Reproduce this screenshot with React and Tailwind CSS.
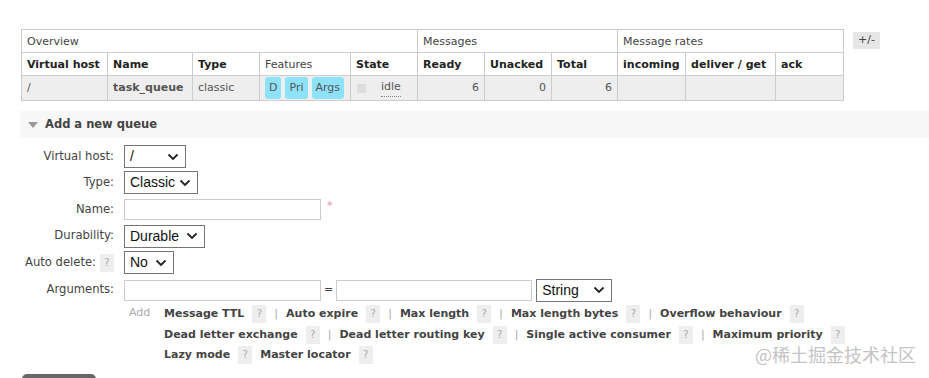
import React from 'react';

const font = { fontFamily: '"DejaVu Sans", Verdana, sans-serif' };

const Help = () => (
  <span className="inline-flex items-center justify-center w-[14px] h-[18px] bg-[#eeeeee] text-[#aaaaaa] text-[10px] font-normal align-middle">?</span>
);

const Chevron = () => (
  <svg width="12" height="8" viewBox="0 0 12 8" className="shrink-0">
    <path d="M1.5 1.5 L6 6 L10.5 1.5" fill="none" stroke="#222" strokeWidth="1.8" />
  </svg>
);

const Select = ({ value, width }) => (
  <div
    className={`flex items-center justify-between h-[23px] border border-[#767676] bg-white pl-[5px] pr-[6px] text-[14px] text-[#111] ${width}`}
    style={{ fontFamily: '"Liberation Sans", Arial, sans-serif' }}
  >
    <span>{value}</span>
    <Chevron />
  </div>
);

const TextInput = ({ width }) => (
  <div className={`h-[21px] border border-[#cccccc] bg-white ${width}`} />
);

const Arg = ({ label, sep = true }) => (
  <span className="inline-flex items-center gap-[8px] mr-[8px]">
    <span className="font-bold">{label}</span>
    <Help />
    {sep && <span className="text-[#aaaaaa] font-normal">|</span>}
  </span>
);

const FormRow = ({ label, help, children, h }) => (
  <div className={`flex items-center ${h}`}>
    <div className="w-[114px] flex justify-end items-center gap-[4px] text-[11.6px] text-[#444]">
      <span>{label}</span>
      {help && <Help />}
    </div>
    <div className="ml-[10px] flex items-center">{children}</div>
  </div>
);

export default function App() {
  const th = 'border border-[#cccccc] px-[5px] pt-[2px] text-left font-bold text-[#222] whitespace-nowrap';
  const thn = 'border border-[#cccccc] px-[5px] pt-[2px] text-left font-normal text-[#444]';
  const td = 'border border-[#cccccc] px-[5px] text-[#555] whitespace-nowrap';
  return (
    <div className="w-[929px] h-[378px] bg-white overflow-hidden text-[11px] text-[#444] relative" style={font}>
      <div className="flex items-start pt-[29px] pl-[21px]">
        <table className="border-collapse table-fixed w-[822px]">
          <colgroup>
            <col className="w-[86px]" />
            <col className="w-[85px]" />
            <col className="w-[67px]" />
            <col className="w-[91px]" />
            <col className="w-[67px]" />
            <col className="w-[67px]" />
            <col className="w-[67px]" />
            <col className="w-[66px]" />
            <col className="w-[68px]" />
            <col className="w-[90px]" />
            <col className="w-[68px]" />
          </colgroup>
          <thead>
            <tr className="h-[23px]">
              <th colSpan={5} className={thn}>Overview</th>
              <th colSpan={3} className={thn}>Messages</th>
              <th colSpan={3} className={thn}>Message rates</th>
            </tr>
            <tr className="h-[23px]">
              <th className={th}>Virtual host</th>
              <th className={th}>Name</th>
              <th className={th}>Type</th>
              <th className={thn}>Features</th>
              <th className={th}>State</th>
              <th className={th}>Ready</th>
              <th className={th}>Unacked</th>
              <th className={th}>Total</th>
              <th className={th}>incoming</th>
              <th className={th}>deliver / get</th>
              <th className={th}>ack</th>
            </tr>
          </thead>
          <tbody>
            <tr className="h-[25px] bg-[#eeeeee]">
              <td className={td}>/</td>
              <td className={`${td} font-bold text-[#222]`}>task_queue</td>
              <td className={td}>classic</td>
              <td className={td}>
                <div className="flex items-center gap-[4px]">
                  <span className="bg-[#8ee2f8] rounded-[3px] px-[4px] pt-[3px] pb-[2px] text-[#555]">D</span>
                  <span className="bg-[#8ee2f8] rounded-[3px] px-[4px] pt-[3px] pb-[2px] text-[#555]">Pri</span>
                  <span className="bg-[#8ee2f8] rounded-[3px] px-[4px] pt-[3px] pb-[2px] text-[#555]">Args</span>
                </div>
              </td>
              <td className={td}>
                <div className="flex items-center">
                  <span className="w-[9px] h-[9px] bg-[#dddddd] ml-[1px]" />
                  <span className="ml-[15px] border-b border-dotted border-[#888]">idle</span>
                </div>
              </td>
              <td className={`${td} text-right`}>6</td>
              <td className={`${td} text-right`}>0</td>
              <td className={`${td} text-right`}>6</td>
              <td className={td}></td>
              <td className={td}></td>
              <td className={td}></td>
            </tr>
          </tbody>
        </table>
        <div className="ml-[9px] mt-[3px] bg-[#e6e6e6] text-[#444] h-[17px] px-[5px] flex items-center">+/-</div>
      </div>

      <div className="mt-[10px] ml-[20px] h-[27px] bg-[#f7f7f7] flex items-center">
        <svg width="10" height="6" viewBox="0 0 10 6" className="ml-[8px]">
          <path d="M0 0 L10 0 L5 6 Z" fill="#999" />
        </svg>
        <span className="ml-[7px] font-bold text-[11.5px] text-[#444]">Add a new queue</span>
      </div>

      <div className="mt-[6px]">
        <FormRow label="Virtual host:" h="h-[25px]">
          <Select value="/" width="w-[62px]" />
        </FormRow>
        <FormRow label="Type:" h="h-[27px]">
          <Select value="Classic" width="w-[74px]" />
        </FormRow>
        <FormRow label="Name:" h="h-[27px]">
          <TextInput width="w-[197px]" />
          <span className="ml-[6px] text-[#ee88aa] text-[11px] -mt-[6px]">*</span>
        </FormRow>
        <FormRow label="Durability:" h="h-[26px]">
          <Select value="Durable" width="w-[81px]" />
        </FormRow>
        <FormRow label="Auto delete:" help h="h-[27px]">
          <Select value="No" width="w-[50px]" />
        </FormRow>
        <FormRow label="Arguments:" h="h-[28px]">
          <TextInput width="w-[197px]" />
          <span className="mx-[3px] text-[#444]">=</span>
          <TextInput width="w-[196px]" />
          <div className="ml-[4px]">
            <Select value="String" width="w-[76px]" />
          </div>
        </FormRow>
        <div className="flex ml-[129px]">
          <span className="text-[#aaaaaa] w-[35px] leading-[18px]">Add</span>
          <div className="w-[690px] leading-[20px] text-[#444]">
            <div className="flex items-center h-[20px]">
              <Arg label="Message TTL" />
              <Arg label="Auto expire" />
              <Arg label="Max length" />
              <Arg label="Max length bytes" />
              <Arg label="Overflow behaviour" sep={false} />
            </div>
            <div className="flex items-center h-[21px]">
              <Arg label="Dead letter exchange" />
              <Arg label="Dead letter routing key" />
              <Arg label="Single active consumer" />
              <Arg label="Maximum priority" sep={false} />
            </div>
            <div className="flex items-center h-[20px]">
              <Arg label="Lazy mode" sep={false} />
              <Arg label="Master locator" sep={false} />
            </div>
          </div>
        </div>
      </div>

      <div className="absolute left-[22px] top-[374px] w-[74px] h-[10px] bg-[#666666] rounded-t-[5px]" />
      <div
        className="absolute left-[755px] top-[341px] text-[18px] text-[#c4c4c4]"
        style={{ fontFamily: '"Noto Sans CJK SC", sans-serif' }}
      >
        @稀土掘金技术社区
      </div>
    </div>
  );
}
